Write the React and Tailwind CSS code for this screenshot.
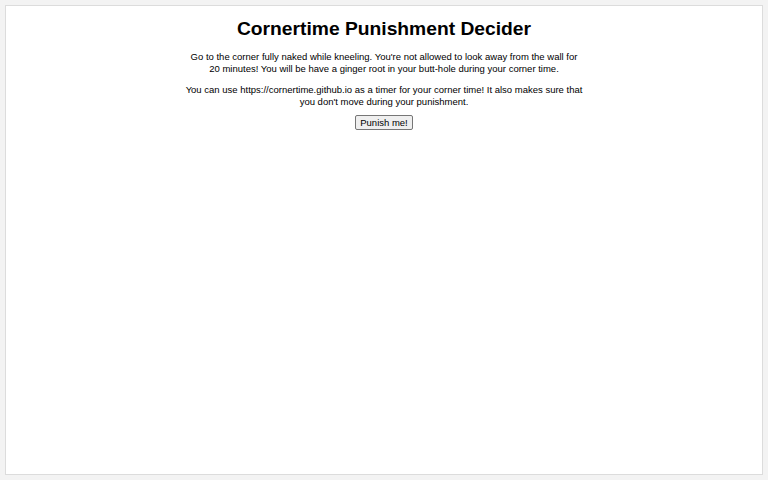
export default function App() {
  return (
    <div className="min-h-screen bg-[#f3f3f3] p-[5px] font-['Liberation_Sans',Arial,sans-serif] text-black">
      <div className="h-[470px] border border-[#dcdcdc] bg-white">
        <div className="mx-auto flex w-[398px] flex-col items-center pt-[11px] text-center">
          <h1 className="text-[19.25px] font-bold leading-[24px]">Cornertime Punishment Decider</h1>
          <p className="mt-[10px] text-[9.5px] leading-[12px]">
            Go to the corner fully naked while kneeling. You're not allowed to look away from the wall for
            20 minutes! You will be have a ginger root in your butt-hole during your corner time.
          </p>
          <p className="mt-[9px] text-[9.5px] leading-[11.5px]">
            You can use https://cornertime.github.io as a timer for your corner time! It also makes sure that
            you don't move during your punishment.
          </p>
          <button className="mt-[8px] rounded-[2px] border border-[#767676] bg-[#efefef] px-[4px] py-[1px] text-[9.5px] leading-[11px]">
            Punish me!
          </button>
        </div>
      </div>
    </div>
  );
}
